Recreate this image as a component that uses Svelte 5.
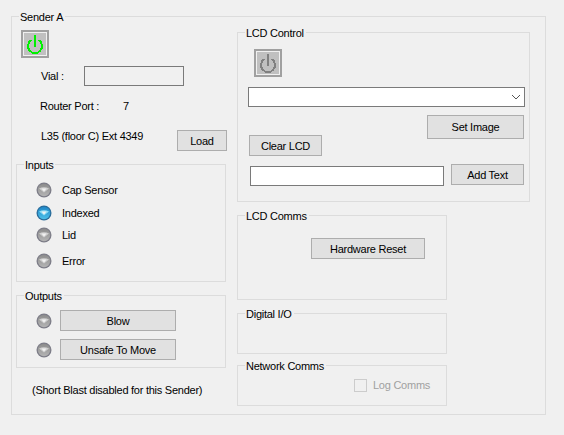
<script>
    const inputs = [
        { name: "Cap Sensor", on: false },
        { name: "Indexed", on: true },
        { name: "Lid", on: false },
        { name: "Error", on: false },
    ];
</script>

{#snippet power(colour)}
    <button class="power" type="button" aria-label="Power">
        <svg width="22" height="22" viewBox="0 0 22 22" fill="none" stroke={colour} stroke-width="2" shape-rendering="crispEdges">
            <path d="M7.5 7A7 7 0 1 0 14.5 7" />
            <path d="M11 2V14" />
        </svg>
    </button>
{/snippet}

{#snippet led(on)}
    <svg class="led" width="16" height="16" viewBox="0 0 16 16">
        <circle cx="8" cy="8" r="7.5" fill={on ? "#2a6c9a" : "#7d7d88"} />
        <circle cx="8" cy="8" r="6.2" fill={on ? "url(#led-blue)" : "url(#led-grey)"} />
        <path d="M3 6.5Q8 4 13 6.5L8 10.5Z" fill={on ? "#8fdcf5" : "#cfcfcf"} />
        <path d="M5.5 6.5H10.5L8 9.5Z" fill="#f2f2f2" />
    </svg>
{/snippet}

<svg class="defs" width="0" height="0" aria-hidden="true">
    <defs>
        <linearGradient id="led-grey" x1="0" y1="0" x2="0" y2="1">
            <stop offset="0" stop-color="#8c8c8c" />
            <stop offset="1" stop-color="#b4b4b4" />
        </linearGradient>
        <linearGradient id="led-blue" x1="0" y1="0" x2="0" y2="1">
            <stop offset="0" stop-color="#1f86c6" />
            <stop offset="1" stop-color="#4cc0ea" />
        </linearGradient>
    </defs>
</svg>

<main class="page">
    <fieldset class="sender">
        <legend>Sender A</legend>
        <div class="columns">
            <div class="left">
                <div class="power-main">{@render power("#00f000")}</div>

                <div class="vial">
                    <span class="vial-label">Vial :</span>
                    <input class="vial-input" type="text" />
                </div>

                <div class="port">
                    <span class="port-label">Router Port :</span>
                    <span>7</span>
                </div>

                <div class="location">
                    <span>L35 (floor C) Ext 4349</span>
                    <button class="btn load" type="button">Load</button>
                </div>

                <fieldset class="inputs">
                    <legend>Inputs</legend>
                    <ul>
                        {#each inputs as item}
                            <li>
                                {@render led(item.on)}
                                <span>{item.name}</span>
                            </li>
                        {/each}
                    </ul>
                </fieldset>

                <fieldset class="outputs">
                    <legend>Outputs</legend>
                    <div class="out-list">
                        <div class="out-row">
                            {@render led(false)}
                            <button class="btn out" type="button">Blow</button>
                        </div>
                        <div class="out-row">
                            {@render led(false)}
                            <button class="btn out" type="button">Unsafe To Move</button>
                        </div>
                    </div>
                </fieldset>

                <p class="note">(Short Blast disabled for this Sender)</p>
            </div>

            <div class="right">
                <fieldset class="lcd">
                    <legend>LCD Control</legend>
                    <div class="power-lcd">{@render power("#808080")}</div>
                    <div class="combo">
                        <svg width="10" height="6" viewBox="0 0 10 6" fill="none" stroke="#555" stroke-width="1">
                            <path d="M1 1L5 5L9 1" />
                        </svg>
                    </div>
                    <div class="image-row">
                        <button class="btn clear" type="button">Clear LCD</button>
                        <button class="btn set" type="button">Set Image</button>
                    </div>
                    <div class="text-row">
                        <input class="text-input" type="text" />
                        <button class="btn add" type="button">Add Text</button>
                    </div>
                </fieldset>

                <fieldset class="comms">
                    <legend>LCD Comms</legend>
                    <button class="btn reset" type="button">Hardware Reset</button>
                </fieldset>

                <fieldset class="digital">
                    <legend>Digital I/O</legend>
                </fieldset>

                <fieldset class="network">
                    <legend>Network Comms</legend>
                    <div class="log">
                        <span class="check"></span>
                        <span>Log Comms</span>
                    </div>
                </fieldset>
            </div>
        </div>
    </fieldset>
</main>

<style>
    :global(body) {
        margin: 0;
        background: #f0f0f0;
    }

    .defs {
        display: block;
    }

    .page {
        box-sizing: border-box;
        width: 564px;
        height: 435px;
        padding: 10px 0 0 11px;
        font-family: "Liberation Sans", Arial, sans-serif;
        font-size: 11px;
        letter-spacing: -0.25px;
        line-height: 14px;
        color: #000;
    }

    fieldset {
        box-sizing: border-box;
        margin: 0;
        padding: 0;
        min-width: 0;
        border: 1px solid #dcdcdc;
    }

    legend {
        margin-left: 7px;
        padding: 0 2px 0 1px;
        height: 13px;
        line-height: 14px;
    }

    .sender {
        width: 535px;
        height: 405px;
    }

    .columns {
        display: flex;
        gap: 11px;
        padding: 1px 0 0 4px;
    }

    .left {
        width: 210px;
    }

    .right {
        width: 293px;
    }

    .btn {
        box-sizing: border-box;
        margin: 0;
        padding: 0;
        height: 21px;
        background: #e1e1e1;
        border: 1px solid #adadad;
        font: inherit;
        letter-spacing: inherit;
        color: #000;
    }

    input {
        box-sizing: border-box;
        margin: 0;
        height: 20px;
        border: 1px solid #7a7a7a;
        border-radius: 0;
        outline: none;
    }

    .power {
        display: block;
        box-sizing: border-box;
        width: 28px;
        height: 28px;
        margin: 0;
        padding: 1px;
        background: #f0f0f0;
        border: 2px solid #a0a0a0;
    }

    .power svg {
        display: block;
        background: #c0c0c0;
    }

    .power-main {
        margin: 6px 0 0 5px;
    }

    .vial {
        display: flex;
        align-items: center;
        margin-top: 8px;
        padding-left: 25px;
    }

    .vial-label {
        width: 43px;
    }

    .vial-input {
        width: 100px;
        background: #f0f0f0;
    }

    .port {
        display: flex;
        margin-top: 13px;
        padding-left: 24px;
    }

    .port-label {
        width: 83px;
    }

    .location {
        display: flex;
        justify-content: space-between;
        align-items: flex-start;
        margin: 16px -1px 0 0;
        padding-left: 25px;
    }

    .load {
        width: 50px;
        margin-top: 1px;
    }

    .inputs {
        width: 210px;
        height: 124px;
        margin-top: 7px;
    }

    ul {
        margin: 0;
        padding: 11px 0 0 19px;
        list-style: none;
    }

    li {
        display: flex;
        align-items: center;
        gap: 10px;
        height: 16px;
    }

    li:nth-child(2) {
        margin-top: 7px;
    }

    li:nth-child(3) {
        margin-top: 6px;
    }

    li:nth-child(4) {
        margin-top: 10px;
    }

    .led {
        display: block;
        flex: none;
    }

    .outputs {
        width: 210px;
        height: 79px;
        margin-top: 7px;
    }

    .out-list {
        padding: 8px 0 0 19px;
    }

    .out-row {
        display: flex;
        align-items: center;
        gap: 8px;
    }

    .out-row + .out-row {
        margin-top: 8px;
    }

    .out {
        width: 116px;
    }

    .note {
        margin: 15px 0 0 16px;
    }

    .lcd {
        width: 293px;
        height: 176px;
        margin-top: 2px;
    }

    .power-lcd {
        margin: 10px 0 0 16px;
    }

    .combo {
        box-sizing: border-box;
        display: flex;
        justify-content: flex-end;
        align-items: center;
        width: 277px;
        height: 20px;
        margin: 10px 0 0 10px;
        padding-right: 3px;
        background: #fff;
        border: 1px solid #7a7a7a;
    }

    .image-row {
        display: flex;
        justify-content: space-between;
        align-items: flex-start;
        width: 275px;
        margin: 8px 0 0 11px;
    }

    .clear {
        width: 73px;
        margin-top: 20px;
    }

    .set {
        width: 97px;
        height: 24px;
    }

    .text-row {
        display: flex;
        justify-content: space-between;
        align-items: flex-start;
        width: 274px;
        margin: 8px 0 0 12px;
    }

    .text-input {
        width: 194px;
        margin-top: 2px;
        background: #fff;
    }

    .add {
        width: 73px;
    }

    .comms {
        width: 210px;
        height: 91px;
        margin-top: 7px;
    }

    .reset {
        display: block;
        width: 114px;
        margin: 16px 0 0 73px;
    }

    .digital {
        width: 210px;
        height: 47px;
        margin-top: 7px;
    }

    .network {
        width: 210px;
        height: 47px;
        margin-top: 5px;
    }

    .log {
        display: flex;
        align-items: center;
        gap: 6px;
        margin: 6px 0 0 116px;
        color: #a0a0a0;
    }

    .check {
        box-sizing: border-box;
        width: 13px;
        height: 13px;
        background: #f0f0f0;
        border: 1px solid #ccc;
    }
</style>
